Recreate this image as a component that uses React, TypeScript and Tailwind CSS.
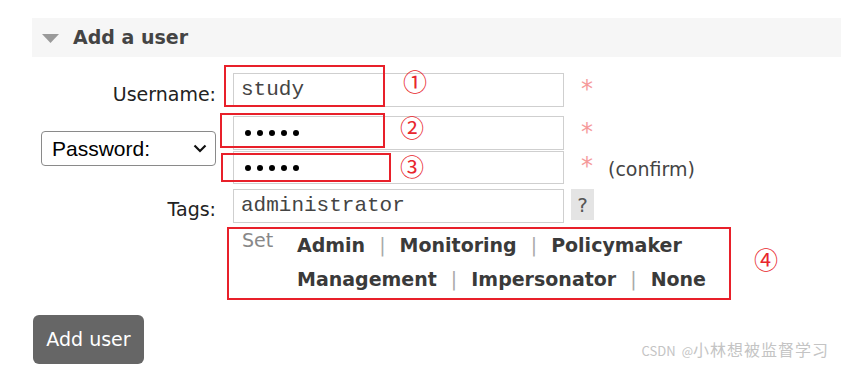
import React from "react";

const sans = "font-['DejaVu_Sans','Verdana',sans-serif]";
const mono = "font-['Liberation_Mono','Courier_New',monospace]";

function Circled({ ch, className }: { ch: string; className: string }) {
  return (
    <span
      className={`absolute text-[#e8262d] text-[24px] leading-none font-['Noto_Sans_CJK_SC','DejaVu_Sans',sans-serif] ${className}`}
    >
      {ch}
    </span>
  );
}

function Star({ className = "" }: { className?: string }) {
  return <span className={`text-[#f59a9a] text-[24px] leading-none ${className}`}>*</span>;
}

function Dots() {
  return (
    <div className="flex gap-[6px] items-center">
      {[0, 1, 2, 3, 4].map((i) => (
        <span key={i} className="w-[6px] h-[6px] rounded-full bg-black inline-block" />
      ))}
    </div>
  );
}

const Sep = () => <span className="text-[#aaa] font-normal px-[14px]">|</span>;

export default function App() {
  return (
    <div className={`relative w-[841px] h-[367px] bg-white overflow-hidden text-[#333] ${sans}`}>
      {/* header */}
      <div className="ml-[32px] mt-[18px] h-[39px] bg-[#f6f6f6] flex items-center">
        <svg width="17" height="9" viewBox="0 0 17 9" className="ml-[10px] mt-[1px]">
          <polygon points="0,0 17,0 8.5,9" fill="#9a9a9a" />
        </svg>
        <span className="ml-[14px] text-[19px] font-bold text-[#444] leading-none">Add a user</span>
      </div>

      {/* username */}
      <div className="flex mt-[16px] h-[34px]">
        <div className="w-[216px] flex items-center justify-end text-[19px] text-[#222] pt-[8px]">Username:</div>
        <div className={`ml-[17px] w-[331px] h-[34px] border border-[#cfcfcf] flex items-center pl-[7px] text-[21px] text-[#444] ${mono}`}>
          study
        </div>
        <Star className="ml-[17px] mt-[4px]" />
      </div>

      {/* password */}
      <div className="flex mt-[9px]">
        <div className="w-[216px] flex justify-start">
          <div className="ml-[41px] mt-[15px] w-[175px] h-[35px] border border-[#8a8a8a] rounded-[4px] flex items-center justify-between px-[10px] font-['Liberation_Sans',Arial,sans-serif] text-[21px] text-black">
            <span>Password:</span>
            <svg width="14" height="9" viewBox="0 0 14 9" className="mr-[-2px]">
              <polyline points="1.5,1.5 7,7 12.5,1.5" fill="none" stroke="#111" strokeWidth="2.2" />
            </svg>
          </div>
        </div>
        <div className="ml-[17px] flex flex-col">
          <div className="w-[331px] h-[34px] border border-[#cfcfcf] flex items-center pl-[11px]">
            <Dots />
          </div>
          <div className="mt-[1px] w-[331px] h-[33px] border border-[#cfcfcf] flex items-center pl-[11px]">
            <Dots />
          </div>
        </div>
        <div className="ml-[17px] flex flex-col">
          <div className="h-[34px] pt-[4px]">
            <Star />
          </div>
          <div className="h-[34px] flex items-start">
            <Star className="mt-[4px]" />
            <span className="ml-[15px] mt-[5px] text-[19px] text-[#444]">(confirm)</span>
          </div>
        </div>
      </div>

      {/* tags */}
      <div className="flex mt-[5px] h-[34px]">
        <div className="w-[216px] flex items-center justify-end text-[19px] text-[#222] pt-[6px]">Tags:</div>
        <div className={`ml-[17px] w-[331px] h-[34px] border border-[#cfcfcf] flex items-center pl-[7px] text-[21px] text-[#444] ${mono}`}>
          administrator
        </div>
        <div className="ml-[7px] w-[23px] h-[31px] bg-[#e4e4e4] flex items-center justify-center text-[20px] text-[#555]">?</div>
      </div>

      {/* tag shortcuts */}
      <div className="flex ml-[242px] mt-[5px]">
        <div className="text-[19px] text-[#888] leading-[34px] mt-[-5px] w-[55px]">Set</div>
        <div className="text-[19px] font-bold text-[#3a3a3a] leading-[34px]">
          <div className="flex">
            <span>Admin</span>
            <Sep />
            <span>Monitoring</span>
            <Sep />
            <span>Policymaker</span>
          </div>
          <div className="flex">
            <span>Management</span>
            <Sep />
            <span>Impersonator</span>
            <Sep />
            <span>None</span>
          </div>
        </div>
      </div>

      {/* button */}
      <div className="ml-[33px] mt-[19px] w-[111px] h-[49px] rounded-[6px] bg-[#666] flex items-center justify-center text-white text-[19px]">
        Add user
      </div>

      {/* annotations */}
      <div className="absolute left-[224px] top-[65px] w-[161px] h-[42px] border-2 border-[#e8202a]" />
      <div className="absolute left-[220px] top-[113px] w-[165px] h-[35px] border-2 border-[#e8202a]" />
      <div className="absolute left-[221px] top-[153px] w-[170px] h-[29px] border-2 border-[#e8202a]" />
      <div className="absolute left-[227px] top-[227px] w-[504px] h-[73px] border-2 border-[#e8202a]" />
      <Circled ch="①" className="left-[403px] top-[69px]" />
      <Circled ch="②" className="left-[400px] top-[115px]" />
      <Circled ch="③" className="left-[400px] top-[154px]" />
      <Circled ch="④" className="left-[754px] top-[247px]" />

      {/* watermark */}
      <div className="absolute right-[12px] top-[341px] flex items-baseline text-[#c4c4c4] leading-none whitespace-nowrap font-['Noto_Sans_CJK_SC',sans-serif]">
        <span className="text-[13px]">CSDN</span>
        <span className="ml-[6px] text-[12px]">@</span>
        <span className="text-[16px] tracking-[1px]">小林想被监督学习</span>
      </div>
    </div>
  );
}
